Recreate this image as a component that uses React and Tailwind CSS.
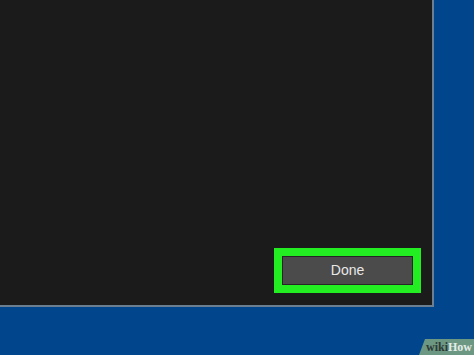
export default function App() {
  return (
    <div className="relative w-[474px] h-[355px] overflow-hidden bg-[#01468c] font-['Liberation_Sans',sans-serif]">
      {/* dialog panel */}
      <div className="w-[434px] h-[307px] bg-[#1b1b1b] border-r-2 border-b-2 border-[#6b7f93] flex items-end justify-end pr-[11px] pb-[12px]">
        <div className="w-[147px] h-[45px] bg-[#22ee22] p-[8px]">
          <button
            type="button"
            className="w-full h-full bg-[#4b4b4b] border border-[#262626] text-[#e8e8e8] text-[14px] flex items-center justify-center"
          >
            Done
          </button>
        </div>
      </div>
      {/* watermark */}
      <div
        className="absolute right-0 bottom-0 h-[16px] w-[55px] bg-[#6c9783] flex items-center justify-end pr-[2px] font-['Liberation_Serif',serif] font-bold text-[12px] leading-none"
        style={{ clipPath: "polygon(6px 0, 100% 0, 100% 100%, 0 100%)" }}
      >
        <span className="text-[#2d3b35]">wiki</span>
        <span className="text-[#e4ece8]">How</span>
      </div>
    </div>
  );
}
